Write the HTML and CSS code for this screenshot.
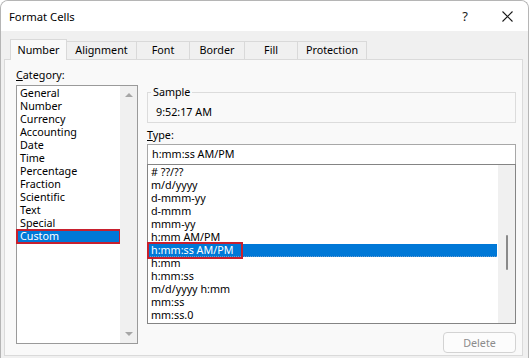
FILE: index.html
```html
<!DOCTYPE html>
<html>
<head>
<meta charset="utf-8">
<title>Format Cells</title>
<link rel="stylesheet" href="styles.css">
</head>
<body>
<div class="window">
  <div class="titlebar">
    <span class="title">Format Cells</span>
    <span class="help">?</span>
    <span class="close"><svg width="11" height="11" viewBox="0 0 11 11"><path d="M0.5 0.5 L10.5 10.5 M10.5 0.5 L0.5 10.5" stroke="#1a1a1a" stroke-width="1.1" fill="none"/></svg></span>
  </div>
  <div class="client">
    <div class="tabs">
      <div class="tab active tab-number">Number</div>
      <div class="tab tab-alignment">Alignment</div>
      <div class="tab tab-font">Font</div>
      <div class="tab tab-border">Border</div>
      <div class="tab tab-fill">Fill</div>
      <div class="tab tab-protection">Protection</div>
    </div>
    <div class="panel">
      <div class="col-left">
        <div class="label"><u>C</u>ategory:</div>
        <div class="listbox cat-list">
          <div class="items">
            <div class="row">General</div>
            <div class="row">Number</div>
            <div class="row">Currency</div>
            <div class="row">Accounting</div>
            <div class="row">Date</div>
            <div class="row">Time</div>
            <div class="row">Percentage</div>
            <div class="row">Fraction</div>
            <div class="row">Scientific</div>
            <div class="row">Text</div>
            <div class="row">Special</div>
            <div class="row selected marked-row">Custom</div>
          </div>
          <div class="vscroll arrows">
            <span class="arrow up"></span>
            <span class="arrow down"></span>
          </div>
        </div>
      </div>
      <div class="col-right">
        <div class="groupbox">
          <div class="group-title">Sample</div>
          <div class="sample-value">9:52:17 AM</div>
        </div>
        <div class="label type-label"><u>T</u>ype:</div>
        <div class="typebox">h:mm:ss AM/PM</div>
        <div class="listbox type-list">
          <div class="items">
            <div class="row"># ??/??</div>
            <div class="row">m/d/yyyy</div>
            <div class="row">d-mmm-yy</div>
            <div class="row">d-mmm</div>
            <div class="row">mmm-yy</div>
            <div class="row">h:mm AM/PM</div>
            <div class="row selected focus-row"><span class="marked">h:mm:ss AM/PM</span></div>
            <div class="row">h:mm</div>
            <div class="row">h:mm:ss</div>
            <div class="row">m/d/yyyy h:mm</div>
            <div class="row">mm:ss</div>
            <div class="row">mm:ss.0</div>
          </div>
          <div class="vscroll thin">
            <span class="thumb"></span>
          </div>
        </div>
        <div class="actions">
          <button class="btn" disabled>Delete</button>
        </div>
      </div>
    </div>
  </div>
</div>
</body>
</html>
```

FILE: styles.css
```css
* { box-sizing: border-box; }

html, body {
  margin: 0;
  padding: 0;
  background: #ffffff;
}

body {
  width: 532px;
  height: 358px;
  overflow: hidden;
  font-family: "Noto Sans", "Open Sans", "DejaVu Sans", sans-serif;
  font-size: 10.75px;
  color: #000;
}

.window {
  width: 529px;
  height: 364px;
  border: 1px solid #b5b5b5;
  border-bottom: none;
  border-radius: 8px 8px 0 0;
  background: #f0f0f0;
  overflow: hidden;
}

/* title bar */
.titlebar {
  height: 30px;
  background: #ffffff;
  display: flex;
  align-items: center;
  padding-left: 8px;
}

.title {
  flex: 1;
  font-size: 11.25px;
  line-height: 16px;
  margin-top: 1px;
}

.help {
  width: 10px;
  text-align: center;
  font-size: 13px;
  line-height: 16px;
  margin-right: 32px;
  color: #1a1a1a;
}

.close {
  width: 11px;
  height: 11px;
  margin-right: 15px;
  display: flex;
}

/* client area */
.client {
  padding-top: 8px;
}

.tabs {
  display: flex;
  align-items: flex-end;
  height: 20px;
  margin-left: 9px;
}

.tab {
  height: 18px;
  line-height: 17px;
  text-align: center;
  border-top: 1px solid #d9d9d9;
  border-right: 1px solid #d9d9d9;
  background: #f0f0f0;
  white-space: nowrap;
}

.tab.active {
  height: 21px;
  line-height: 20px;
  margin-bottom: -1px;
  border-left: 1px solid #d9d9d9;
  background: #f9f9f9;
  position: relative;
  z-index: 1;
}

.tab-number { width: 57px; }
.tab-alignment { width: 70px; }
.tab-font { width: 53px; }
.tab-border { width: 55px; }
.tab-fill { width: 53px; }
.tab-protection { width: 69px; }

.panel {
  height: 297px;
  margin: 0 5px 0 3px;
  border: 1px solid #dadada;
  background: #f9f9f9;
  display: flex;
  gap: 9px;
  padding: 8px 6px 0 11px;
}

.label {
  line-height: 15px;
}

.label u {
  text-decoration-thickness: 1px;
  text-underline-offset: 1px;
}

/* left column */
.col-left {
  width: 122px;
  flex: none;
}

.listbox {
  display: flex;
  background: #ffffff;
  border: 1px solid #9a9a9a;
}

.cat-list {
  margin-top: 2px;
  height: 259px;
}

.items {
  flex: 1;
  min-width: 0;
  padding-top: 1px;
}

.row {
  height: 13px;
  line-height: 13px;
  padding-left: 3px;
  white-space: nowrap;
}

.row.selected {
  background: #0078d7;
  color: #ffffff;
}

.marked-row {
  outline: 2px solid #c8202e;
  outline-offset: -1px;
}

.vscroll {
  width: 17px;
  flex: none;
  background: #f0f0f0;
}

.vscroll.arrows {
  display: flex;
  flex-direction: column;
  justify-content: space-between;
  align-items: center;
  padding: 7px 0 7px 0;
}

.arrow {
  width: 0;
  height: 0;
  border-left: 4px solid transparent;
  border-right: 4px solid transparent;
}

.arrow.up {
  border-bottom: 4px solid #a6a6a6;
}

.arrow.down {
  border-top: 4px solid #a6a6a6;
}

/* right column */
.col-right {
  flex: 1;
  display: flex;
  flex-direction: column;
}

.groupbox {
  margin-top: 24px;
  border: 1px solid #dcdcdc;
  padding: 0 7px 2px 8px;
}

.group-title {
  width: fit-content;
  margin: -8px 0 0 -5px;
  padding: 0 2px;
  line-height: 15px;
  background: #f9f9f9;
}

.sample-value {
  margin-top: 5px;
  line-height: 15px;
}

.type-label {
  margin-top: 5px;
  margin-bottom: 1px;
}

.typebox {
  height: 20px;
  border: 1px solid #a8a8a8;
  border-bottom: none;
  background: #ffffff;
  padding-left: 4px;
  line-height: 19px;
}

.type-list {
  height: 160px;
  border-color: #848484;
}

.type-list .row.selected {
  margin-right: 1px;
  background-image: linear-gradient(to right, #6b9fd0 50%, transparent 50%);
  background-size: 2px 1px;
  background-repeat: repeat-x;
  background-position: bottom left;
  background-color: #0078d7;
}

.marked {
  display: inline-block;
  width: 92px;
  height: 13px;
  margin-left: -2px;
  padding-left: 2px;
  outline: 2px solid #c8202e;
}

.vscroll.thin {
  display: flex;
  flex-direction: column;
  align-items: center;
}

.thumb {
  width: 2px;
  height: 35px;
  margin-top: 70px;
  margin-left: 1px;
  background: #8a8a8a;
  border-radius: 1px;
}

.actions {
  display: flex;
  justify-content: flex-end;
  margin-top: 8px;
}

.btn {
  width: 73px;
  height: 21px;
  border: 1px solid #d3d3d3;
  border-radius: 4px;
  background: #fcfcfc;
  color: #8c8c8c;
  font-family: inherit;
  font-size: 10.75px;
  padding: 0;
}
```
